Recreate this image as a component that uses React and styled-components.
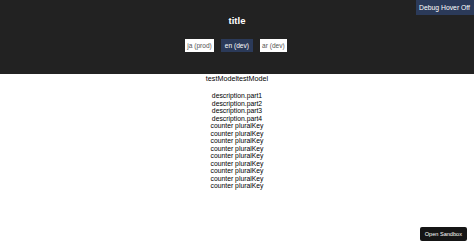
import React from 'react';
import styled, { createGlobalStyle } from 'styled-components';

const GlobalStyle = createGlobalStyle`
  html, body {
    margin: 0;
    padding: 0;
    background: #fff;
    font-family: "Liberation Sans", Arial, sans-serif;
  }
`;

const Page = styled.div`
  width: 474px;
  height: 248px;
  position: relative;
  overflow: hidden;
`;

const Header = styled.header`
  height: 74px;
  background: #222;
  display: flex;
  flex-direction: column;
  align-items: center;
  padding-top: 15px;
  box-sizing: border-box;
`;

const Title = styled.h1`
  margin: 0;
  color: #fff;
  font-size: 9.5px;
  font-weight: bold;
  line-height: 12px;
`;

const LangRow = styled.div`
  display: flex;
  gap: 6.5px;
  margin-top: 12px;
  margin-right: 2px;
`;

const LangButton = styled.button`
  height: 13px;
  padding: 0 ${p => (p.$active ? '4px' : '2.5px')};
  border: none;
  font-family: inherit;
  font-size: 6.6px;
  background: ${p => (p.$active ? '#2b3a59' : '#fff')};
  color: ${p => (p.$active ? '#fff' : '#555')};
`;

const Content = styled.main`
  display: flex;
  flex-direction: column;
  align-items: center;
  color: #000;
  font-size: 6.8px;
  line-height: 7.5px;
`;

const ModelLine = styled.div`
  margin-top: 1px;
  font-size: 7.2px;
  line-height: 8px;
`;

const List = styled.div`
  margin-top: 9px;
  display: flex;
  flex-direction: column;
  align-items: center;
`;

const DebugToggle = styled.button`
  position: absolute;
  top: 0;
  right: 0;
  height: 15px;
  padding: 0 4px 0 3px;
  border: none;
  background: #2b3a59;
  color: #fff;
  font-family: inherit;
  font-size: 6.8px;
`;

const SandboxButton = styled.button`
  position: absolute;
  right: 7px;
  bottom: 7px;
  height: 14px;
  padding: 0 5px;
  border: none;
  border-radius: 2px;
  background: #151515;
  color: #fff;
  font-family: inherit;
  font-size: 5.6px;
`;

const descriptions = ['part1', 'part2', 'part3', 'part4'];

export default function App() {
  return (
    <Page>
      <GlobalStyle />
      <Header>
        <Title>title</Title>
        <LangRow>
          <LangButton>ja (prod)</LangButton>
          <LangButton $active>en (dev)</LangButton>
          <LangButton>ar (dev)</LangButton>
        </LangRow>
      </Header>
      <Content>
        <ModelLine>testModeltestModel</ModelLine>
        <List>
          {descriptions.map(d => (
            <div key={d}>description.{d}</div>
          ))}
          {Array.from({ length: 9 }, (_, i) => (
            <div key={i}>counter pluralKey</div>
          ))}
        </List>
      </Content>
      <DebugToggle>Debug Hover Off</DebugToggle>
      <SandboxButton>Open Sandbox</SandboxButton>
    </Page>
  );
}
